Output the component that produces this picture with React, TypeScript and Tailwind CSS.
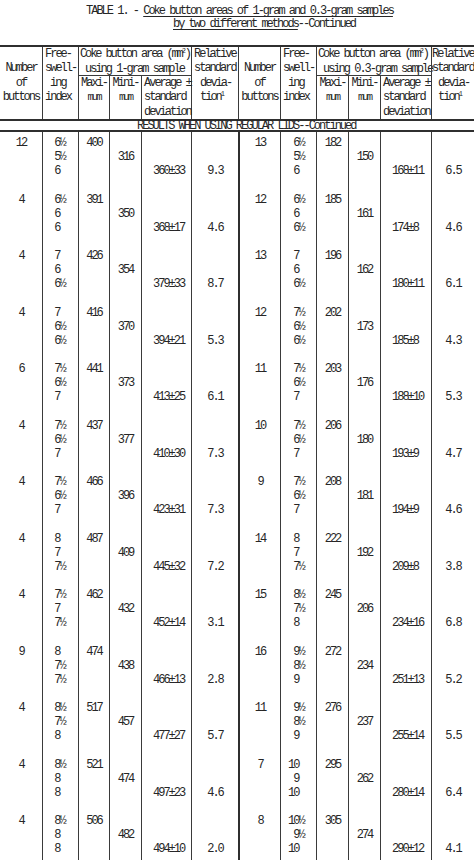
import React from 'react';

type Row = [string, string[], string, string, string, string];

const left: Row[] = [
  ['12', ['6½', '5½', '6'], '400', '316', '360±33', '9.3'],
  ['4', ['6½', '6', '6'], '391', '350', '368±17', '4.6'],
  ['4', ['7', '6', '6½'], '426', '354', '379±33', '8.7'],
  ['4', ['7', '6½', '6½'], '416', '370', '394±21', '5.3'],
  ['6', ['7½', '6½', '7'], '441', '373', '413±25', '6.1'],
  ['4', ['7½', '6½', '7'], '437', '377', '410±30', '7.3'],
  ['4', ['7½', '6½', '7'], '466', '396', '423±31', '7.3'],
  ['4', ['8', '7', '7½'], '487', '409', '445±32', '7.2'],
  ['4', ['7½', '7', '7½'], '462', '432', '452±14', '3.1'],
  ['9', ['8', '7½', '7½'], '474', '438', '466±13', '2.8'],
  ['4', ['8½', '7½', '8'], '517', '457', '477±27', '5.7'],
  ['4', ['8½', '8', '8'], '521', '474', '497±23', '4.6'],
  ['4', ['8½', '8', '8'], '506', '482', '494±10', '2.0'],
];

const right: Row[] = [
  ['13', ['6½', '5½', '6'], '182', '150', '168±11', '6.5'],
  ['12', ['6½', '6', '6½'], '185', '161', '174±8', '4.6'],
  ['13', ['7', '6', '6½'], '196', '162', '180±11', '6.1'],
  ['12', ['7½', '6½', '6½'], '202', '173', '185±8', '4.3'],
  ['11', ['7½', '6½', '7'], '203', '176', '188±10', '5.3'],
  ['10', ['7½', '6½', '7'], '206', '180', '193±9', '4.7'],
  ['9', ['7½', '6½', '7'], '208', '181', '194±9', '4.6'],
  ['14', ['8', '7', '7½'], '222', '192', '209±8', '3.8'],
  ['15', ['8½', '7½', '8'], '245', '206', '234±16', '6.8'],
  ['16', ['9½', '8½', '9'], '272', '234', '251±13', '5.2'],
  ['11', ['9½', '8½', '9'], '276', '237', '255±14', '5.5'],
  ['7', ['10', '9', '10'], '295', '262', '280±14', '6.4'],
  ['8', ['10½', '9½', '10'], '305', '274', '290±12', '4.1'],
];

const cols = 'grid grid-cols-[42px_36px_31px_32px_50px_47px_42px_36px_32px_32px_51px_43px]';

function Swell({ v }: { v: string }) {
  const whole = v.replace('½', '');
  return (
    <div>
      <span className="inline-block w-[10.4px] text-right">{whole}</span>
      {v.includes('½') ? '½' : ''}
    </div>
  );
}

function HeaderHalf({ sample, first }: { sample: string; first: boolean }) {
  return (
    <>
      <div className={`row-span-2 flex flex-col items-center justify-center text-center ${first ? '' : 'border-l border-[#3a3a3a]'}`}>
        <div>Number</div>
        <div>of</div>
        <div>buttons</div>
      </div>
      <div className="row-span-2 border-l border-[#3a3a3a] pl-[2px]">
        <div>Free-</div>
        <div>swell-</div>
        <div className="pl-[5px]">ing</div>
        <div>index</div>
      </div>
      <div className="col-span-3 border-l border-b border-[#3a3a3a] pl-[1px]">
        <div className="tracking-[-2.12px]">
          Coke button area (mm<span className="relative top-[-4px] text-[7px] tracking-[-1px]">2</span>)
        </div>
        <div className="pl-[5px]">using {sample} sample</div>
      </div>
      <div className={`row-span-2 border-l border-[#3a3a3a] ${first ? 'pl-[2px]' : 'pl-0'}`}>
        <div>Relative</div>
        <div>standard</div>
        <div className="pl-[6px]">devia-</div>
        <div className="pl-[6px]">
          tion<span className="relative top-[-4px] text-[7px] tracking-normal">1</span>
        </div>
      </div>
    </>
  );
}

function SubHeader() {
  return (
    <>
      <div className="border-l border-[#3a3a3a] text-center">
        <div>Maxi-</div>
        <div className="text-[10.5px]">mum</div>
      </div>
      <div className="border-l border-[#3a3a3a] text-center">
        <div>Mini-</div>
        <div className="text-[10.5px]">mum</div>
      </div>
      <div className="border-l border-[#3a3a3a] pl-[2px]">
        <div>Average ±</div>
        <div>standard</div>
        <div>deviation</div>
      </div>
    </>
  );
}

function DataHalf({ row, first }: { row: Row; first: boolean }) {
  const [num, fs, max, min, avg, rel] = row;
  return (
    <>
      <div className={`pt-[4px] text-center ${first ? '' : 'border-l-2 border-[#2f2f2f]'}`}>{num}</div>
      <div className={`border-l border-[#3a3a3a] pt-[4px] ${first ? 'pl-[6px]' : 'pl-[7px]'}`}>
        {fs.map((v, i) => (
          <Swell key={i} v={v} />
        ))}
      </div>
      <div className="border-l border-[#3a3a3a] pt-[4px] text-center">{max}</div>
      <div className="border-l border-[#3a3a3a] pt-[18.1px] text-center">{min}</div>
      <div className="border-l border-[#3a3a3a] pt-[32.2px] pl-[11px]">{avg}</div>
      <div className="border-l border-[#3a3a3a] pt-[32.2px] text-center">{rel}</div>
    </>
  );
}

export default function App() {
  return (
    <div className="h-[860px] w-[474px] overflow-hidden whitespace-nowrap bg-white font-['Liberation_Mono','DejaVu_Sans_Mono',monospace] text-[12px] tracking-[-2px] text-[#262626]">
      <div className="pt-[5px] leading-[13px]">
        <div className="pl-[86px] whitespace-pre">
          TABLE 1. - <span className="underline decoration-1 underline-offset-2">Coke button areas of 1-gram and 0.3-gram samples</span>
        </div>
        <div className="pl-[173px] whitespace-pre">
          <span className="underline decoration-1 underline-offset-2">by two different methods</span>--Continued
        </div>
      </div>

      <div className="mt-[14px] border-t-2 border-[#2f2f2f]">
        <div className={`${cols} grid-rows-[29px_43px] leading-[14.4px]`}>
          <HeaderHalf sample="1-gram" first />
          <HeaderHalf sample="0.3-gram" first={false} />
          <SubHeader />
          <SubHeader />
        </div>

        <div className="h-[11px] border-t-2 border-[#2f2f2f] pl-[137px] leading-[11px] whitespace-pre">
          RESULTS WHEN USING REGULAR LIDS--Continued
        </div>

        <div className="border-t-2 border-[#2f2f2f] leading-[14.1px]">
          {left.map((row, i) => (
            <div key={i} className={`${cols} h-[56.5px]`}>
              <DataHalf row={row} first />
              <DataHalf row={right[i]} first={false} />
            </div>
          ))}
        </div>
      </div>
    </div>
  );
}
